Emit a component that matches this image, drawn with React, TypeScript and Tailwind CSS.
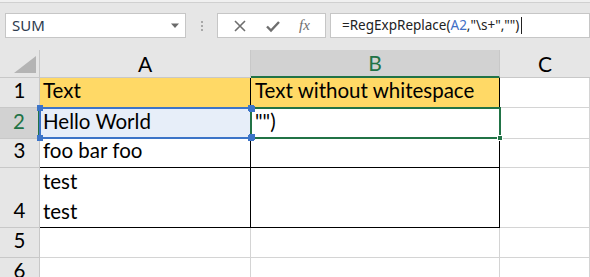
import React from "react";

const cellFont = { fontFamily: "Lato, 'Open Sans', sans-serif" };

export default function App() {
  const g = "border-r border-b border-[#d4d4d4]";
  return (
    <div className="w-[590px] h-[277px] overflow-hidden bg-white relative" style={cellFont}>
      {/* toolbar */}
      <div className="h-[50px] bg-[#e6e6e6] flex flex-col">
        <div className="h-[3px] bg-[#f0f0f0] border-b border-[#d0d0d0]" />
        <div className="flex items-center pt-[10px] pl-[5px]">
          <div className="w-[181px] h-[25px] bg-white border border-[#c6c6c6] flex items-center justify-between pl-[6px] pr-[5px]">
            <span className="text-[15px] text-[#2c3a4e]" style={{ fontFamily: "'Noto Sans', sans-serif" }}>SUM</span>
            <svg width="10" height="6" viewBox="0 0 10 6"><path d="M1 0.5 L9 0.5 L5 5 Z" fill="#6a6a6a" /></svg>
          </div>
          <div className="w-[31px] flex flex-col items-center gap-[2px]">
            <div className="w-[2px] h-[2px] bg-[#a8a8a8]" />
            <div className="w-[2px] h-[2px] bg-[#a8a8a8]" />
            <div className="w-[2px] h-[2px] bg-[#a8a8a8]" />
          </div>
          <div className="w-[109px] h-[25px] bg-white border border-[#c6c6c6] flex items-center justify-around px-[6px]">
            <svg width="14" height="14" viewBox="0 0 14 14"><path d="M2 2 L12 12 M12 2 L2 12" stroke="#6e6e6e" strokeWidth="1.6" /></svg>
            <svg width="16" height="14" viewBox="0 0 16 14"><path d="M2 7.5 L6 11.5 L14 3" stroke="#6e6e6e" strokeWidth="2.4" fill="none" /></svg>
            <span className="text-[15px] italic text-[#6e6e6e]" style={{ fontFamily: "'Liberation Serif', serif" }}>fx</span>
          </div>
          <div className="ml-[4px] flex-1 h-[25px] bg-white border border-[#c6c6c6] flex items-center pl-[11px]">
            <span className="text-[13.5px] text-[#222]" style={{ fontFamily: "'Noto Sans', sans-serif" }}>
              =RegExpReplace(<span className="text-[#3f6fc6]">A2</span>,"\s+","")
            </span>
            <div className="w-[1px] h-[17px] bg-[#222] ml-[2px]" />
          </div>
        </div>
      </div>

      {/* grid */}
      <div className="relative grid grid-cols-[40px_211px_249px_90px] grid-rows-[28px_30px_31px_29px_60px_30px_30px] text-[20.5px] text-black">
        {/* header row */}
        <div className="bg-[#e6e6e6] border-r border-b border-[#c8c8c8] relative">
          <svg className="absolute right-[3px] bottom-[4px]" width="22" height="17" viewBox="0 0 22 17"><path d="M22 0 L22 17 L0 17 Z" fill="#b4b4b4" /></svg>
        </div>
        <div className="bg-[#e6e6e6] border-r border-b border-[#c8c8c8] flex items-center justify-center text-[21px]">A</div>
        <div className="bg-[#d2d2d2] border-r border-[#c8c8c8] border-b-2 border-b-[#217346] flex items-center justify-center text-[21px] text-[#217346]">B</div>
        <div className="bg-[#e6e6e6] border-b border-[#c8c8c8] flex items-center justify-center text-[21px]">C</div>

        {/* row 1 */}
        <div className="bg-[#e6e6e6] border-r border-b border-[#c8c8c8] flex items-end justify-center pb-[1px]">1</div>
        <div className="bg-[#ffd966] border-r border-b border-black flex items-end pl-[3px] pb-[1px]">Text</div>
        <div className="bg-[#ffd966] border-r border-b border-black flex items-end pl-[4px] pb-[1px]">Text without whitespace</div>
        <div className={g}></div>

        {/* row 2 */}
        <div className="bg-[#d2d2d2] border-r-2 border-r-[#217346] border-b border-[#c8c8c8] flex items-end justify-center pb-[1px] text-[#217346]">2</div>
        <div className="bg-[#e7eef9] border-r border-b border-black flex items-end pl-[3px] pb-[1px]">Hello World</div>
        <div className="border-r border-b border-black flex items-end pl-[4px] pb-[1px]">"")</div>
        <div className={g}></div>

        {/* row 3 */}
        <div className="bg-[#e6e6e6] border-r border-b border-[#c8c8c8] flex items-end justify-center pb-[1px]">3</div>
        <div className="border-r border-b border-black flex items-end pl-[3px] pb-[1px]">foo bar foo</div>
        <div className="border-r border-b border-black"></div>
        <div className={g}></div>

        {/* row 4 */}
        <div className="bg-[#e6e6e6] border-r border-b border-[#c8c8c8] flex items-end justify-center pb-[1px]">4</div>
        <div className="border-r border-b border-black flex flex-col justify-end pl-[3px] pb-[1px] leading-[30px]">
          <span>test</span>
          <span>test</span>
        </div>
        <div className="border-r border-b border-black"></div>
        <div className={g}></div>

        {/* row 5 */}
        <div className="bg-[#e6e6e6] border-r border-b border-[#c8c8c8] flex items-end justify-center pb-[1px]">5</div>
        <div className={g}></div>
        <div className={g}></div>
        <div className={g}></div>

        {/* row 6 */}
        <div className="bg-[#e6e6e6] border-r border-b border-[#c8c8c8] flex items-end justify-center pb-[1px]">6</div>
        <div className={g}></div>
        <div className={g}></div>
        <div className={g}></div>

        {/* A2 reference highlight */}
        <div className="absolute left-[39px] top-[57px] w-[213px] h-[32px] border-2 border-[#3c74c8] pointer-events-none">
          <div className="absolute -left-[4px] -top-[4px] w-[6px] h-[6px] bg-[#3c74c8]" />
          <div className="absolute -right-[4px] -top-[4px] w-[6px] h-[6px] bg-[#3c74c8]" />
          <div className="absolute -left-[4px] -bottom-[4px] w-[6px] h-[6px] bg-[#3c74c8]" />
          <div className="absolute -right-[4px] -bottom-[4px] w-[6px] h-[6px] bg-[#3c74c8]" />
        </div>
        {/* B2 active cell */}
        <div className="absolute left-[250px] top-[57px] w-[251px] h-[32px] border-2 border-[#217346] pointer-events-none">
          <div className="absolute -right-[4px] -bottom-[4px] w-[6px] h-[6px] bg-[#217346] border border-white" />
          <div className="absolute -left-[3px] -top-[3px] w-[6px] h-[6px] bg-[#3c74c8]" />
          <div className="absolute -left-[3px] -bottom-[3px] w-[6px] h-[6px] bg-[#3c74c8]" />
        </div>
      </div>
    </div>
  );
}
